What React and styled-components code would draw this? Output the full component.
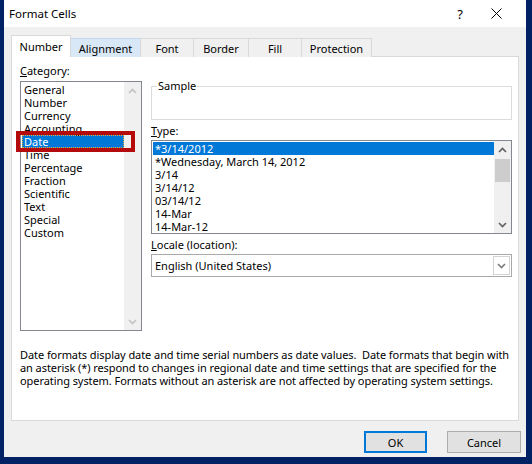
import React from "react";
import styled, { createGlobalStyle } from "styled-components";

const GlobalStyle = createGlobalStyle`
  html, body {
    margin: 0;
    padding: 0;
    background: #002163;
  }
  body {
    font-family: "Noto Sans", "Segoe UI", sans-serif;
    font-size: 11px;
    color: #000;
  }
`;

const categories = [
  "General",
  "Number",
  "Currency",
  "Accounting",
  "Date",
  "Time",
  "Percentage",
  "Fraction",
  "Scientific",
  "Text",
  "Special",
  "Custom",
];

const types = [
  "*3/14/2012",
  "*Wednesday, March 14, 2012",
  "3/14",
  "3/14/12",
  "03/14/12",
  "14-Mar",
  "14-Mar-12",
];

const tabs = [
  { label: "Number", width: 60, active: true },
  { label: "Alignment", width: 71, hover: true },
  { label: "Font", width: 54 },
  { label: "Border", width: 56 },
  { label: "Fill", width: 54 },
  { label: "Protection", width: 71 },
];

const Chevron = ({ dir = "up", color = "#606060" }) => (
  <svg width="9" height="6" viewBox="0 0 9 6">
    <path
      d={dir === "up" ? "M1 5 L4.5 1.5 L8 5" : "M1 1 L4.5 4.5 L8 1"}
      fill="none"
      stroke={color}
      strokeWidth="1.6"
    />
  </svg>
);

const CloseIcon = () => (
  <svg width="11" height="11" viewBox="0 0 11 11">
    <path d="M0.5 0.5 L10.5 10.5 M10.5 0.5 L0.5 10.5" stroke="#000" strokeWidth="1" />
  </svg>
);

const App = () => {
  return (
    <>
      <GlobalStyle />
      <Page>
        <Dialog>
          <TitleBar>
            <Title>Format Cells</Title>
            <HelpButton>?</HelpButton>
            <CloseButton>
              <CloseIcon />
            </CloseButton>
          </TitleBar>
          <Body>
            <TabRow>
              {tabs.map((t) => (
                <Tab key={t.label} $width={t.width} $active={t.active} $hover={t.hover}>
                  {t.label}
                </Tab>
              ))}
            </TabRow>
            <Panel>
              <Columns>
                <Column>
                  <Label>
                    <u>C</u>ategory:
                  </Label>
                  <ListBox $height={250}>
                    <Items $padTop={1}>
                      {categories.map((c) => (
                        <Item key={c} $selected={c === "Date"} $focus={c === "Date"}>
                          {c}
                        </Item>
                      ))}
                    </Items>
                    <ScrollBar>
                      <ArrowButton>
                        <Chevron dir="up" color="#c2c2c2" />
                      </ArrowButton>
                      <ArrowButton>
                        <Chevron dir="down" color="#c2c2c2" />
                      </ArrowButton>
                    </ScrollBar>
                    <Highlight />
                  </ListBox>
                </Column>
                <Column>
                  <SampleGroup>
                    <legend>Sample</legend>
                    <SampleBody />
                  </SampleGroup>
                  <Label $top={4}>
                    <u>T</u>ype:
                  </Label>
                  <ListBox $height={94}>
                    <Items $padTop={1}>
                      {types.map((t, i) => (
                        <Item key={t} $selected={i === 0}>
                          {t}
                        </Item>
                      ))}
                    </Items>
                    <ScrollBar>
                      <ArrowButton>
                        <Chevron dir="up" />
                      </ArrowButton>
                      <Thumb />
                      <Spacer />
                      <ArrowButton>
                        <Chevron dir="down" />
                      </ArrowButton>
                    </ScrollBar>
                  </ListBox>
                  <Label $top={4}>
                    <u>L</u>ocale (location):
                  </Label>
                  <Select>
                    <SelectValue>English (United States)</SelectValue>
                    <DropButton>
                      <Chevron dir="down" color="#7a7a7a" />
                    </DropButton>
                  </Select>
                </Column>
              </Columns>
              <Description>
                <Line>
                  Date formats display date and time serial numbers as date values.&nbsp; Date formats that begin with
                </Line>
                <Line>
                  an asterisk (*) respond to changes in regional date and time settings that are specified for the
                </Line>
                <Line>
                  operating system. Formats without an asterisk are not affected by operating system settings.
                </Line>
              </Description>
            </Panel>
            <Footer>
              <Button $primary $width={63}>OK</Button>
              <Button $width={74}>Cancel</Button>
            </Footer>
          </Body>
        </Dialog>
      </Page>
    </>
  );
};

const Page = styled.div`
  height: 464px;
  padding-left: 4px;
  background: #002163;
  box-sizing: border-box;
`;

const Dialog = styled.div`
  width: 522px;
  height: 457px;
  background: #f0f0f0;
  display: flex;
  flex-direction: column;
`;

const TitleBar = styled.div`
  height: 27px;
  background: #fff;
  display: flex;
  align-items: center;
  padding: 0 7px 0 5px;
  flex-shrink: 0;
`;

const Title = styled.span`
  flex: 1;
  font-size: 11.5px;
`;

const HelpButton = styled.span`
  width: 26px;
  text-align: center;
  font-size: 13px;
`;

const CloseButton = styled.span`
  width: 46px;
  display: flex;
  justify-content: center;
  align-items: center;
`;

const Body = styled.div`
  padding: 8px 7px 0 7px;
  display: flex;
  flex-direction: column;
`;

const TabRow = styled.div`
  height: 22px;
  display: flex;
  align-items: flex-end;
  margin-bottom: -1px;
  position: relative;
  z-index: 1;
`;

const Tab = styled.div`
  box-sizing: border-box;
  width: ${(p) => p.$width}px;
  height: ${(p) => (p.$active ? 22 : 19)}px;
  margin-left: ${(p) => (p.$active ? 0 : -1)}px;
  padding-top: ${(p) => (p.$active ? 0 : 1)}px;
  border: 1px solid ${(p) => (p.$hover ? "#c3d8ee" : "#d9d9d9")};
  border-bottom: none;
  background: ${(p) => (p.$active ? "#fff" : p.$hover ? "#d9e8f6" : "#f0f0f0")};
  display: flex;
  align-items: center;
  justify-content: center;
  position: relative;
  z-index: ${(p) => (p.$active ? 2 : 1)};
  &:first-child {
    margin-left: 0;
  }
`;

const Panel = styled.div`
  box-sizing: border-box;
  height: 365px;
  border: 1px solid #d9d9d9;
  background: #fff;
  padding: 7px 6px 0 8px;
`;

const Columns = styled.div`
  display: grid;
  grid-template-columns: 122px 361px;
  column-gap: 9px;
  align-items: start;
`;

const Column = styled.div`
  display: flex;
  flex-direction: column;
`;

const Label = styled.div`
  height: 14px;
  line-height: 14px;
  margin-top: ${(p) => p.$top || 0}px;
  margin-bottom: ${(p) => (p.$top ? 2 : 3)}px;
`;

const ListBox = styled.div`
  box-sizing: border-box;
  height: ${(p) => p.$height}px;
  border: 1px solid #828790;
  display: flex;
  position: relative;
`;

const Items = styled.div`
  flex: 1;
  padding-top: ${(p) => p.$padTop}px;
  padding-left: 1px;
  overflow: hidden;
`;

const Item = styled.div`
  height: 13px;
  line-height: 13px;
  padding-left: 2px;
  white-space: nowrap;
  background: ${(p) => (p.$selected ? "#0078d7" : "transparent")};
  color: ${(p) => (p.$selected ? "#fff" : "#000")};
  outline: ${(p) => (p.$focus ? "1px dotted #f2a93b" : "none")};
  outline-offset: -1px;
`;

const ScrollBar = styled.div`
  width: 17px;
  background: #f0f0f0;
  display: flex;
  flex-direction: column;
  justify-content: space-between;
`;

const ArrowButton = styled.div`
  height: 17px;
  display: flex;
  align-items: center;
  justify-content: center;
`;

const Thumb = styled.div`
  height: 23px;
  margin: 1px 1px 0 1px;
  background: #cdcdcd;
`;

const Spacer = styled.div`
  flex: 1;
`;

const Highlight = styled.div`
  position: absolute;
  left: -5px;
  top: 49px;
  width: 119px;
  height: 21px;
  box-sizing: border-box;
  border: 4px solid #b40a0a;
  pointer-events: none;
`;

const SampleGroup = styled.fieldset`
  margin: 15px 0 0 0;
  padding: 0;
  border: 1px solid #dcdcdc;
  min-width: 0;
  legend {
    margin-left: 5px;
    padding: 0 1px;
    line-height: 14px;
    font-size: 11px;
  }
`;

const SampleBody = styled.div`
  height: 26px;
`;

const Select = styled.div`
  box-sizing: border-box;
  height: 23px;
  border: 1px solid #a9a9a9;
  display: flex;
  align-items: center;
  padding: 1px;
`;

const SelectValue = styled.span`
  flex: 1;
  padding-left: 2px;
`;

const DropButton = styled.div`
  box-sizing: border-box;
  width: 17px;
  height: 19px;
  border: 1px solid #d4d4d4;
  display: flex;
  align-items: center;
  justify-content: center;
`;

const Description = styled.div`
  margin-top: 17px;
  letter-spacing: -0.07px;
`;

const Line = styled.div`
  height: 13px;
  line-height: 13px;
  white-space: nowrap;
`;

const Footer = styled.div`
  display: flex;
  justify-content: flex-end;
  gap: 20px;
  padding-top: 10px;
  margin-right: -2px;
`;

const Button = styled.div`
  box-sizing: border-box;
  width: ${(p) => p.$width}px;
  height: 22px;
  background: #e1e1e1;
  border: ${(p) => (p.$primary ? "2px solid #0078d7" : "1px solid #adadad")};
  display: flex;
  align-items: center;
  justify-content: center;
`;

export default App;
